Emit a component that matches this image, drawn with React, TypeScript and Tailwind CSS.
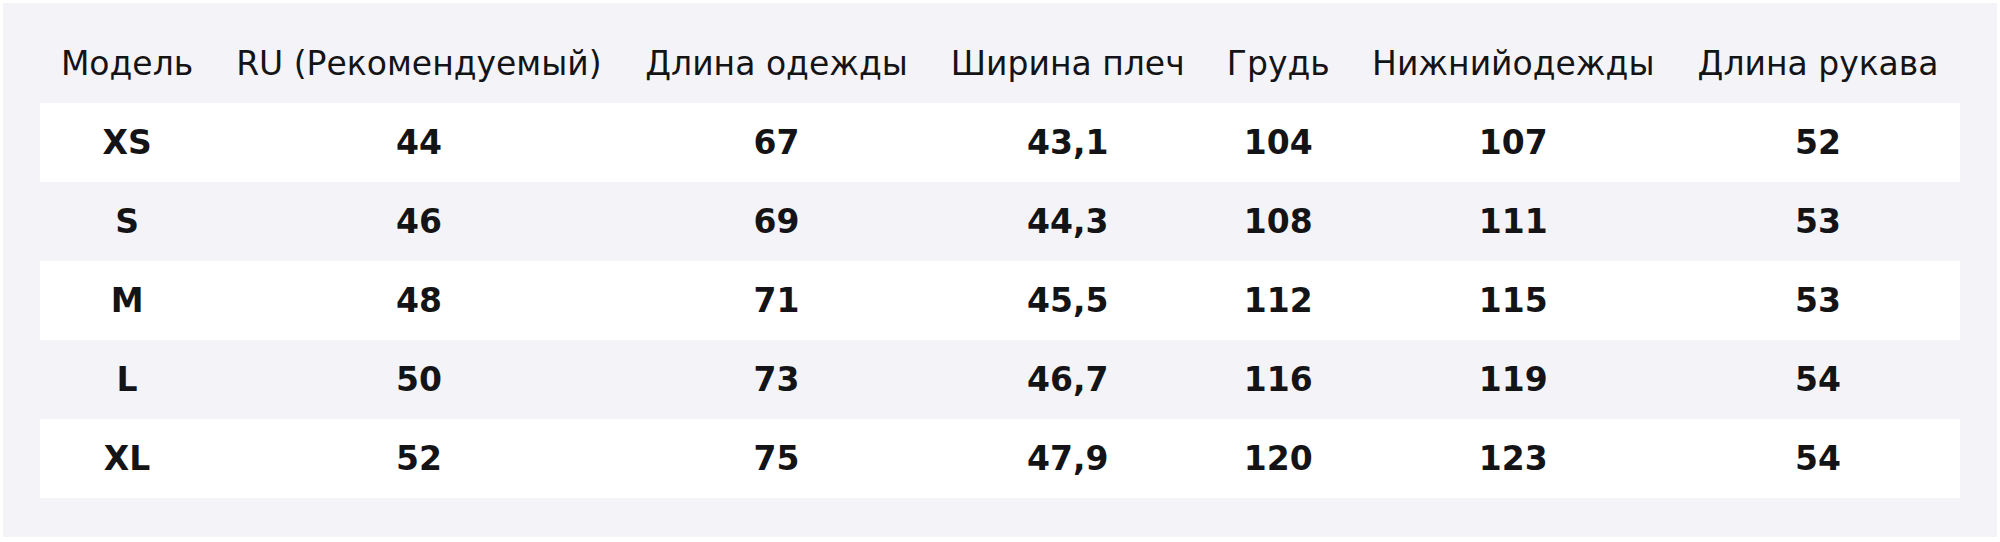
const headers = [
  'Модель',
  'RU (Рекомендуемый)',
  'Длина одежды',
  'Ширина плеч',
  'Грудь',
  'Нижнийодежды',
  'Длина рукава',
];

const rows = [
  ['XS', '44', '67', '43,1', '104', '107', '52'],
  ['S', '46', '69', '44,3', '108', '111', '53'],
  ['M', '48', '71', '45,5', '112', '115', '53'],
  ['L', '50', '73', '46,7', '116', '119', '54'],
  ['XL', '52', '75', '47,9', '120', '123', '54'],
];

export default function App() {
  return (
    <div className="min-h-[542px] bg-white p-[3px]">
      <div
        className="bg-[#f4f4f8] pt-[21px] px-[37px] pb-[39px] text-[#141416]"
        style={{ fontFamily: '"DejaVu Sans", "Noto Sans", sans-serif' }}
      >
        <table className="w-full border-collapse text-center text-[33px]">
          <thead>
            <tr>
              {headers.map((h) => (
                <th key={h} className="px-5 py-5 leading-[39px] font-normal whitespace-nowrap">
                  {h}
                </th>
              ))}
            </tr>
          </thead>
          <tbody>
            {rows.map((r, i) => (
              <tr key={r[0]} className={i % 2 === 0 ? 'bg-white' : ''}>
                {r.map((c, j) => (
                  <td key={j} className="px-5 py-5 leading-[39px] font-bold whitespace-nowrap">
                    {c}
                  </td>
                ))}
              </tr>
            ))}
          </tbody>
        </table>
      </div>
    </div>
  );
}
